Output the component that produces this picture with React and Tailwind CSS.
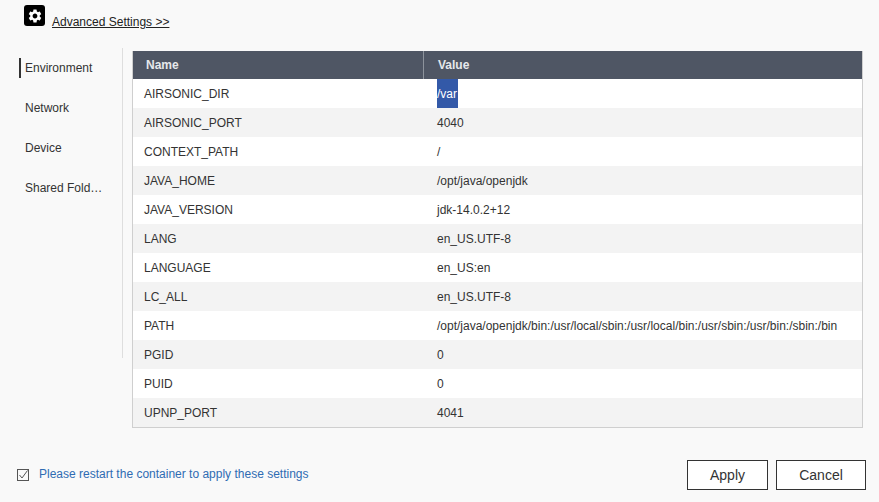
import React from 'react';
import { MdSettings } from 'react-icons/md';

const rows = [
    ['AIRSONIC_DIR', '/var'],
    ['AIRSONIC_PORT', '4040'],
    ['CONTEXT_PATH', '/'],
    ['JAVA_HOME', '/opt/java/openjdk'],
    ['JAVA_VERSION', 'jdk-14.0.2+12'],
    ['LANG', 'en_US.UTF-8'],
    ['LANGUAGE', 'en_US:en'],
    ['LC_ALL', 'en_US.UTF-8'],
    ['PATH', '/opt/java/openjdk/bin:/usr/local/sbin:/usr/local/bin:/usr/sbin:/usr/bin:/sbin:/bin'],
    ['PGID', '0'],
    ['PUID', '0'],
    ['UPNP_PORT', '4041'],
];

const menu = ['Environment', 'Network', 'Device', 'Shared Fold…'];

export default function App() {
    return (
        <div className="w-[879px] h-[502px] bg-[#f9f9f9] text-[#333] text-[12px] overflow-hidden"
            style={{ fontFamily: '"Liberation Sans", Arial, sans-serif' }}>
            {/* top link */}
            <div className="h-[48px] flex items-start pl-[24px] pt-[5px]">
                <div className="w-[21px] h-[21px] bg-black rounded-[3px] flex items-center justify-center">
                    <MdSettings className="text-white w-[16px] h-[16px]" />
                </div>
                <a className="ml-[7px] mt-[11px] underline text-[#222] leading-none">Advanced Settings &gt;&gt;</a>
            </div>

            <div className="flex">
                {/* side menu */}
                <div className="w-[122px] pl-[19px] h-[310px]">
                    {menu.map((item, i) => (
                        <div key={item} className="h-[40px] flex items-center">
                            <div className={"w-[2px] h-[20px] " + (i === 0 ? 'bg-[#333]' : 'bg-transparent')} />
                            <span className="ml-[4px]">{item}</span>
                        </div>
                    ))}
                </div>
                <div className="w-px h-[310px] bg-[#dedede]" />

                {/* table */}
                <div className="ml-[9px] mt-[3px] w-[731px] border-l border-r border-b border-[#cfcfcf]">
                    <div className="flex h-[28px] bg-[#4f5664] text-[#e6e8eb] font-bold">
                        <div className="w-[290px] pl-[13px] flex items-center">Name</div>
                        <div className="flex-1 pl-[14px] flex items-center border-l border-[#8d939c]">Value</div>
                    </div>
                    {rows.map(([name, value], i) => (
                        <div key={name} className={"flex h-[29px] " + (i % 2 === 0 ? 'bg-white' : 'bg-[#f3f3f3]')}>
                            <div className="w-[290px] pl-[11px] flex items-center">{name}</div>
                            <div className="flex-1 pl-[14px] flex items-stretch">
                                {i === 0 ? (
                                    <span className="bg-[#3359a8] text-white flex items-center pr-[1px]">{value}</span>
                                ) : (
                                    <span className="flex items-center">{value}</span>
                                )}
                            </div>
                        </div>
                    ))}
                </div>
            </div>

            {/* footer */}
            <div className="flex items-center mt-[32px] h-[30px] pl-[17px] pr-[13px]">
                <svg width="12" height="12" viewBox="0 0 12 12">
                    <rect x="0.5" y="0.5" width="11" height="11" fill="none" stroke="#555" />
                    <path d="M2.5 6 L5 9 L10.5 1.5" fill="none" stroke="#555" strokeWidth="1" />
                </svg>
                <span className="ml-[10px] -mt-[2px] text-[#2f6cb3]">Please restart the container to apply these settings</span>
                <div className="ml-auto flex gap-[8px]">
                    <button className="w-[81px] h-[30px] border border-[#333] bg-white text-[14px] text-[#333]">Apply</button>
                    <button className="w-[90px] h-[30px] border border-[#333] bg-white text-[14px] text-[#333]">Cancel</button>
                </div>
            </div>
        </div>
    );
}
